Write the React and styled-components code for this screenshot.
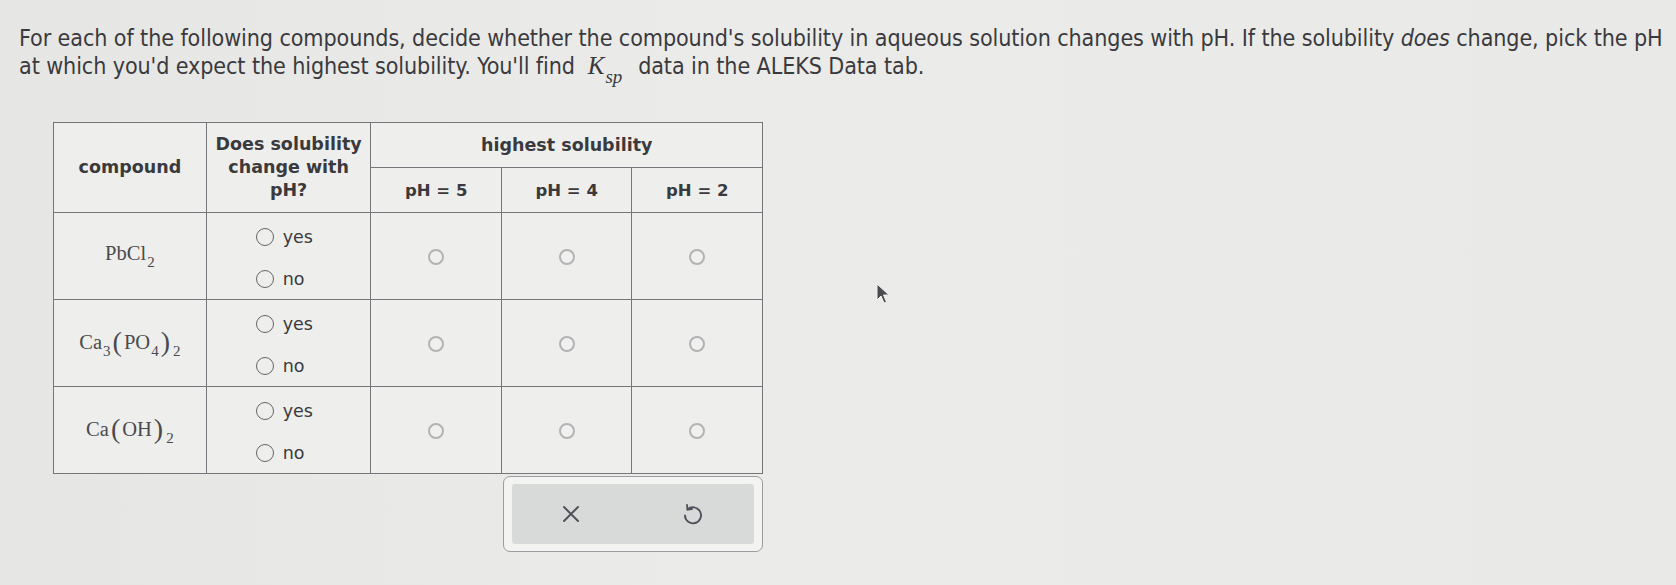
import React from "react";
import styled, { createGlobalStyle } from "styled-components";

const GlobalStyle = createGlobalStyle`
  html, body {
    margin: 0;
    padding: 0;
    background: #e8e8e6;
  }
  body {
    font-family: "DejaVu Sans Condensed", "DejaVu Sans", sans-serif;
    color: #3a3a3e;
  }
`;

const Page = styled.div`
  position: relative;
  width: 1676px;
  height: 585px;
  overflow: hidden;
  background: linear-gradient(90deg, #e6e6e4 0%, #ebebe9 45%, #e9e9e7 100%);
  padding: 24px 0 0 19px;
  box-sizing: border-box;
`;

const Prompt = styled.p`
  margin: 0;
  font-size: 23.1px;
  line-height: 28px;
  letter-spacing: -0.1px;
  color: #3a3a3e;
`;

const Ksp = styled.span`
  font-family: "Liberation Serif", serif;
  font-style: italic;
  font-size: 25px;
  margin: 0 16px 0 13px;
  sub {
    font-size: 19px;
    vertical-align: -9px;
    margin-left: 1px;
  }
`;

const TableArea = styled.div`
  margin: 31px 0 0 34px;
  width: 710px;
  display: flex;
  flex-direction: column;
  align-items: flex-end;
`;

const Grid = styled.table`
  border-collapse: collapse;
  background: #eeeeec;
  font-family: "DejaVu Sans", sans-serif;
  color: #3a3a3e;
`;

const Th = styled.th`
  border: 1.5px solid #76767a;
  font-size: ${(p) => (p.$small ? 16.5 : 17.5)}px;
  font-weight: bold;
  line-height: 23px;
  text-align: center;
  width: ${(p) => p.$w}px;
  height: ${(p) => p.$h}px;
  padding: 0;
`;

const Td = styled.td`
  border: 1.5px solid #76767a;
  text-align: center;
  vertical-align: middle;
  width: ${(p) => p.$w}px;
  height: 86px;
  padding: 0;
`;

const Formula = styled.span`
  font-family: "Liberation Serif", serif;
  font-size: 20.5px;
  color: #4a4a4e;
  sub {
    font-size: 15px;
    vertical-align: -7px;
    margin-left: 1px;
  }
`;

const Paren = styled.span`
  font-size: 28px;
  vertical-align: -2px;
  margin: 0 2px;
`;

const Choices = styled.div`
  display: flex;
  flex-direction: column;
  gap: 22px;
  align-items: flex-start;
  padding: 4px 0 0 49px;
`;

const Choice = styled.label`
  display: flex;
  align-items: center;
  gap: 9px;
  font-size: 17.5px;
  color: #3a3a3e;
  line-height: 20px;
`;

const Radio = styled.span`
  display: inline-block;
  box-sizing: border-box;
  width: ${(p) => (p.$small ? 16 : 18)}px;
  height: ${(p) => (p.$small ? 16 : 18)}px;
  margin-top: ${(p) => (p.$small ? 6 : 0)}px;
  border-radius: 50%;
  border: ${(p) => (p.$small ? "2px solid #b3b3b5" : "1.6px solid #66666a")};
  background: ${(p) => (p.$small ? "#f0f0ee" : "transparent")};
`;

const ActionBox = styled.div`
  margin-top: 2px;
  width: 260px;
  height: 76px;
  box-sizing: border-box;
  border: 1.5px solid #9c9ca0;
  border-radius: 7px;
  background: #f3f3f1;
  padding: 7px 8px;
`;

const ActionBar = styled.div`
  height: 100%;
  background: #d8dada;
  border-radius: 3px;
  display: grid;
  grid-template-columns: 1fr 1fr;
  align-items: center;
  justify-items: center;
`;

const IconButton = styled.span`
  display: flex;
  align-items: center;
  justify-content: center;
  color: #50515a;
  margin-left: ${(p) => p.$shift || 0}px;
`;

const Cursor = styled.svg`
  position: absolute;
  left: 876px;
  top: 283px;
`;

const rows = [
  {
    key: "pbcl2",
    formula: (
      <Formula>
        PbCl<sub>2</sub>
      </Formula>
    ),
  },
  {
    key: "ca3po42",
    formula: (
      <Formula>
        Ca<sub>3</sub>
        <Paren>(</Paren>PO<sub>4</sub>
        <Paren>)</Paren>
        <sub>2</sub>
      </Formula>
    ),
  },
  {
    key: "caoh2",
    formula: (
      <Formula>
        Ca<Paren>(</Paren>OH<Paren>)</Paren>
        <sub>2</sub>
      </Formula>
    ),
  },
];

const phCols = ["pH = 5", "pH = 4", "pH = 2"];

export default function App() {
  return (
    <Page>
      <GlobalStyle />
      <Prompt>
        For each of the following compounds, decide whether the compound's solubility in aqueous
        solution changes with pH. If the solubility <i>does</i> change, pick the pH
        <br />
        at which you'd expect the highest solubility. You'll find
        <Ksp>
          K<sub>sp</sub>
        </Ksp>
        data in the ALEKS Data tab.
      </Prompt>

      <TableArea>
        <Grid>
          <thead>
            <tr>
              <Th rowSpan={2} $w={152}>compound</Th>
              <Th rowSpan={2} $w={164}>
                Does solubility
                <br />
                change with
                <br />
                pH?
              </Th>
              <Th colSpan={3} $h={44}>highest solubility</Th>
            </tr>
            <tr>
              {phCols.map((ph) => (
                <Th key={ph} $small $w={130} $h={44}>
                  {ph}
                </Th>
              ))}
            </tr>
          </thead>
          <tbody>
            {rows.map((row) => (
              <tr key={row.key}>
                <Td $w={152}>{row.formula}</Td>
                <Td $w={164}>
                  <Choices>
                    <Choice>
                      <Radio />
                      yes
                    </Choice>
                    <Choice>
                      <Radio />
                      no
                    </Choice>
                  </Choices>
                </Td>
                {phCols.map((ph) => (
                  <Td key={ph} $w={130}>
                    <Radio $small />
                  </Td>
                ))}
              </tr>
            ))}
          </tbody>
        </Grid>

        <ActionBox>
          <ActionBar>
            <IconButton $shift={-4}>
              <svg width="22" height="22" viewBox="0 0 22 22" fill="none" stroke="currentColor" strokeWidth="2" strokeLinecap="round">
                <path d="M4 4 L18 18 M18 4 L4 18" />
              </svg>
            </IconButton>
            <IconButton $shift={-4}>
              <svg width="22" height="24" viewBox="0 0 22 24" fill="none" stroke="currentColor" strokeWidth="1.9" strokeLinecap="round" strokeLinejoin="round">
                <path d="M6.5 7.5 A8 8 0 1 1 4 13.5" />
                <path d="M6 3 L6.5 7.5 L11 7" />
              </svg>
            </IconButton>
          </ActionBar>
        </ActionBox>
      </TableArea>

      <Cursor width="16" height="22" viewBox="0 0 16 22">
        <path d="M1 1 L1 17 L5 13 L8 20 L10.5 19 L7.5 12 L13 12 Z" fill="#4a4a50" stroke="#f2f2f2" strokeWidth="1" />
      </Cursor>
    </Page>
  );
}
